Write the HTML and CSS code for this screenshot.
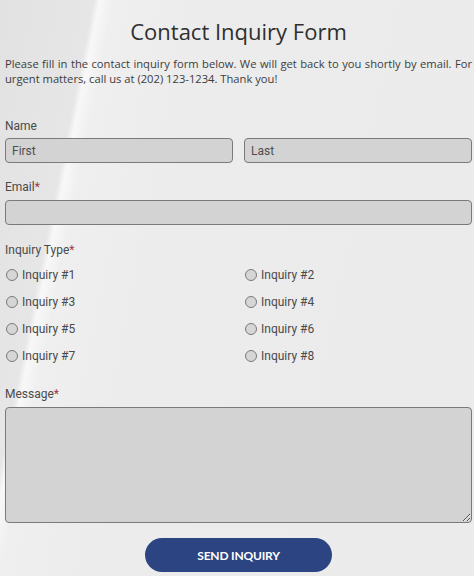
FILE: index.html
```html
<!DOCTYPE html>
<html lang="en">
<head>
<meta charset="utf-8">
<title>Contact Inquiry Form</title>
<link rel="stylesheet" href="styles.css">
</head>
<body>
<div class="page">
  <h1 class="title">Contact Inquiry Form</h1>
  <p class="intro">Please fill in the contact inquiry form below. We will get back to you shortly by email. For urgent matters, call us at (202) 123-1234. Thank you!</p>
  <form class="form">
    <div class="field field-name">
      <label class="label">Name</label>
      <div class="two-col">
        <input class="input" type="text" placeholder="First">
        <input class="input" type="text" placeholder="Last">
      </div>
    </div>
    <div class="field field-email">
      <label class="label">Email<span class="req">*</span></label>
      <input class="input" type="email">
    </div>
    <div class="field field-type">
      <label class="label">Inquiry Type<span class="req">*</span></label>
      <div class="two-col radios">
        <label class="radio"><input type="radio" name="t"><span>Inquiry #1</span></label>
        <label class="radio"><input type="radio" name="t"><span>Inquiry #2</span></label>
        <label class="radio"><input type="radio" name="t"><span>Inquiry #3</span></label>
        <label class="radio"><input type="radio" name="t"><span>Inquiry #4</span></label>
        <label class="radio"><input type="radio" name="t"><span>Inquiry #5</span></label>
        <label class="radio"><input type="radio" name="t"><span>Inquiry #6</span></label>
        <label class="radio"><input type="radio" name="t"><span>Inquiry #7</span></label>
        <label class="radio"><input type="radio" name="t"><span>Inquiry #8</span></label>
      </div>
    </div>
    <div class="field field-msg">
      <label class="label">Message<span class="req">*</span></label>
      <textarea class="input textarea"></textarea>
    </div>
    <div class="actions">
      <button type="button" class="btn">SEND INQUIRY</button>
    </div>
  </form>
</div>
</body>
</html>
```
FILE: styles.css
```css
html, body {
  margin: 0;
  padding: 0;
}
body {
  background: #ececec;
}
.page {
  box-sizing: border-box;
  width: 474px;
  min-height: 576px;
  padding: 11px 2px 0 5px;
  background: linear-gradient(101.3deg, #e2e2e2 0px, #e6e6e6 92px, #f8f8f8 98px, #efefef 112px, #ececec 200px, #ebebeb 100%);
  overflow: hidden;
}
.title {
  margin: 0;
  font-family: "Open Sans", sans-serif;
  font-weight: 400;
  font-size: 22px;
  line-height: 40px;
  color: #2f2f2f;
  text-align: center;
}
.intro {
  margin: 5px 0 0;
  font-family: "Open Sans", sans-serif;
  font-size: 11.2px;
  line-height: 15px;
  color: #3c3c3c;
  text-align: justify;
}
.form {
  margin-top: 33px;
  display: flex;
  flex-direction: column;
}
.field {
  display: flex;
  flex-direction: column;
}
.label {
  font-family: Roboto, sans-serif;
  font-size: 12px;
  line-height: 14px;
  color: #4a4a4a;
  margin-bottom: 5px;
}
.req {
  color: #a33a3a;
}
.two-col {
  display: grid;
  grid-template-columns: 1fr 1fr;
  column-gap: 11px;
}
.input {
  box-sizing: border-box;
  height: 25px;
  margin: 0;
  padding: 0 6px;
  border: 1.5px solid #7a7a7a;
  border-radius: 4px;
  background: #d3d3d3;
  font-family: Roboto, sans-serif;
  font-size: 12px;
  color: #444;
  outline: none;
  width: 100%;
}
.input::placeholder {
  color: #4e4e4e;
}
.field-email {
  margin-top: 17px;
}
.field-email .label,
.field-msg .label {
  margin-bottom: 6px;
}
.field-type {
  margin-top: 18px;
}
.field-type .label {
  margin-bottom: 11px;
}
.radios {
  row-gap: 13px;
}
.radio {
  display: flex;
  align-items: center;
  gap: 4px;
  font-family: Roboto, sans-serif;
  font-size: 12px;
  line-height: 14px;
  color: #4a4a4a;
}
.radio input {
  appearance: none;
  -webkit-appearance: none;
  box-sizing: border-box;
  width: 12px;
  height: 12px;
  margin: 0 0 0 1px;
  border: 1px solid #7a7a7a;
  border-radius: 50%;
  background: #d6d6d6;
}
.field-msg {
  margin-top: 24px;
}
.textarea {
  height: 116px;
  padding: 4px 6px;
  resize: vertical;
}
.actions {
  display: flex;
  justify-content: center;
  margin-top: 15px;
}
.btn {
  width: 187px;
  height: 34px;
  border: none;
  border-radius: 17px;
  background: #2c4582;
  color: #ffffff;
  font-family: Lato, sans-serif;
  font-weight: 700;
  font-size: 12px;
  letter-spacing: -0.2px;
  cursor: pointer;
}
```
